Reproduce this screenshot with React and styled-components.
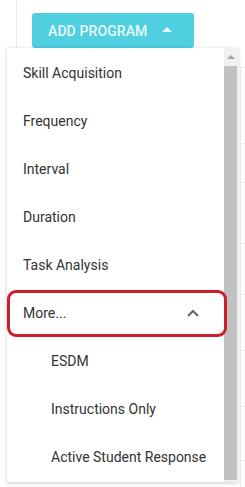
import React from 'react';
import styled, { createGlobalStyle } from 'styled-components';

const GlobalStyle = createGlobalStyle`
  html, body {
    margin: 0;
    padding: 0;
    background: #ffffff;
    font-family: Roboto, "Liberation Sans", Arial, sans-serif;
  }
`;

const Page = styled.div`
  position: relative;
  width: 245px;
  height: 487px;
  overflow: hidden;
  background: #ffffff;
`;

const Toolbar = styled.div`
  margin-left: 16px;
  height: 48px;
  box-sizing: border-box;
  padding: 13px 0 0 15px;
  border-left: 1px solid #e8e8e8;
`;

const AddButton = styled.button`
  width: 162px;
  height: 35px;
  display: flex;
  align-items: center;
  gap: 15px;
  padding: 0 0 0 16px;
  box-sizing: border-box;
  border: none;
  border-radius: 3px;
  background: #4fcfe0;
  color: #e9f9fb;
  font-family: Roboto, "Liberation Sans", Arial, sans-serif;
  font-weight: 500;
  font-size: 14px;
  letter-spacing: 0.1px;
`;

const Caret = styled.span`
  width: 0;
  height: 0;
  border-left: 5px solid transparent;
  border-right: 5px solid transparent;
  border-bottom: 5px solid #e9f9fb;
  margin-top: -2px;
`;

const Table = styled.div`
  margin-top: 19px;
  margin-left: 240px;
  border-left: 1px solid #eeeeee;
`;

const TableRow = styled.div`
  height: ${(p) => p.h}px;
  border-top: 1px solid #eeeeee;
`;

const Menu = styled.div`
  position: absolute;
  left: 7px;
  top: 48px;
  width: 231px;
  height: 434px;
  display: flex;
  background: #ffffff;
  box-shadow: 0 1px 4px rgba(0, 0, 0, 0.22);
`;

const List = styled.div`
  flex: 1;
  min-width: 0;
  padding-top: 1px;
`;

const Item = styled.div`
  position: relative;
  height: 48px;
  display: flex;
  align-items: center;
  justify-content: space-between;
  padding: 0 24px 0 ${(p) => (p.sub ? 44 : 16)}px;
  font-size: 14px;
  color: #333333;
  white-space: nowrap;

  ${(p) =>
    p.marked &&
    `
    &::after {
      content: '';
      position: absolute;
      left: 0;
      right: -3px;
      top: 1px;
      bottom: 0;
      border: 3px solid #cc1f2a;
      border-radius: 9px;
      pointer-events: none;
    }
  `}
`;

const Scrollbar = styled.div`
  width: 14px;
  display: flex;
  flex-direction: column;
  background: #f1f1f1;
`;

const ArrowUp = styled.div`
  height: 18px;
  display: flex;
  align-items: center;
  justify-content: center;

  &::before {
    content: '';
    border-left: 4px solid transparent;
    border-right: 4px solid transparent;
    border-bottom: 4px solid #a3a3a3;
  }
`;

const Thumb = styled.div`
  flex: 1;
  margin: 0 1px 2px 0;
  background: #c1c1c1;
`;

const Chevron = () => (
  <svg width="14" height="10" viewBox="0 0 14 10">
    <path d="M2 8 L7 3 L12 8" fill="none" stroke="#666" strokeWidth="2" />
  </svg>
);

const items = [
  { label: 'Skill Acquisition' },
  { label: 'Frequency' },
  { label: 'Interval' },
  { label: 'Duration' },
  { label: 'Task Analysis' },
  { label: 'More...', marked: true, chevron: true },
  { label: 'ESDM', sub: true },
  { label: 'Instructions Only', sub: true },
  { label: 'Active Student Response', sub: true },
];

const rows = [75, 38, 60, 50, 55, 55, 53, 60];

export default function App() {
  return (
    <Page>
      <GlobalStyle />
      <Toolbar>
        <AddButton>
          ADD PROGRAM
          <Caret />
        </AddButton>
      </Toolbar>
      <Table>
        {rows.map((h, i) => (
          <TableRow key={i} h={h} />
        ))}
      </Table>
      <Menu>
        <List>
          {items.map((it) => (
            <Item key={it.label} sub={it.sub} marked={it.marked}>
              <span>{it.label}</span>
              {it.chevron && <Chevron />}
            </Item>
          ))}
        </List>
        <Scrollbar>
          <ArrowUp />
          <Thumb />
        </Scrollbar>
      </Menu>
    </Page>
  );
}
